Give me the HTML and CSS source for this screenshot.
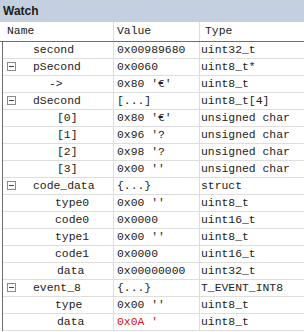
FILE: index.html
```html
<!DOCTYPE html>
<html lang="en">
<head>
    <meta charset="UTF-8">
    <title>Watch</title>
    <link rel="stylesheet" href="styles.css">
</head>
<body>
    <div class="watch">
        <div class="title">Watch</div>
        <div class="head">
            <div class="hcell name">Name</div>
            <div class="hcell value">Value</div>
            <div class="hcell type">Type</div>
        </div>
        <div class="rows">
            <div class="row"><div class="cell name lv0">second</div><div class="cell value">0x00989680</div><div class="cell type">uint32_t</div></div>
            <div class="row"><div class="cell name lv0"><svg class="box" width="9" height="9" viewBox="0 0 9 9"><rect x="0.5" y="0.5" width="8" height="8" fill="#fff" stroke="#8a8a8a"/><line x1="2" y1="4.5" x2="7" y2="4.5" stroke="#444"/></svg>pSecond</div><div class="cell value">0x0060</div><div class="cell type">uint8_t*</div></div>
            <div class="row"><div class="cell name lv1 arrow">-&gt;</div><div class="cell value">0x80 '€'</div><div class="cell type">uint8_t</div></div>
            <div class="row"><div class="cell name lv0"><svg class="box" width="9" height="9" viewBox="0 0 9 9"><rect x="0.5" y="0.5" width="8" height="8" fill="#fff" stroke="#8a8a8a"/><line x1="2" y1="4.5" x2="7" y2="4.5" stroke="#444"/></svg>dSecond</div><div class="cell value">[...]</div><div class="cell type">uint8_t[4]</div></div>
            <div class="row"><div class="cell name lv1 idx">[0]</div><div class="cell value">0x80 '€'</div><div class="cell type">unsigned char</div></div>
            <div class="row"><div class="cell name lv1 idx">[1]</div><div class="cell value">0x96 '?</div><div class="cell type">unsigned char</div></div>
            <div class="row"><div class="cell name lv1 idx">[2]</div><div class="cell value">0x98 '?</div><div class="cell type">unsigned char</div></div>
            <div class="row"><div class="cell name lv1 idx">[3]</div><div class="cell value">0x00 ''</div><div class="cell type">unsigned char</div></div>
            <div class="row"><div class="cell name lv0"><svg class="box" width="9" height="9" viewBox="0 0 9 9"><rect x="0.5" y="0.5" width="8" height="8" fill="#fff" stroke="#8a8a8a"/><line x1="2" y1="4.5" x2="7" y2="4.5" stroke="#444"/></svg>code_data</div><div class="cell value">{...}</div><div class="cell type">struct</div></div>
            <div class="row"><div class="cell name lv1">type0</div><div class="cell value">0x00 ''</div><div class="cell type">uint8_t</div></div>
            <div class="row"><div class="cell name lv1">code0</div><div class="cell value">0x0000</div><div class="cell type">uint16_t</div></div>
            <div class="row"><div class="cell name lv1">type1</div><div class="cell value">0x00 ''</div><div class="cell type">uint8_t</div></div>
            <div class="row"><div class="cell name lv1">code1</div><div class="cell value">0x0000</div><div class="cell type">uint16_t</div></div>
            <div class="row"><div class="cell name lv1 idx">data</div><div class="cell value">0x00000000</div><div class="cell type">uint32_t</div></div>
            <div class="row"><div class="cell name lv0"><svg class="box" width="9" height="9" viewBox="0 0 9 9"><rect x="0.5" y="0.5" width="8" height="8" fill="#fff" stroke="#8a8a8a"/><line x1="2" y1="4.5" x2="7" y2="4.5" stroke="#444"/></svg>event_8</div><div class="cell value">{...}</div><div class="cell type">T_EVENT_INT8</div></div>
            <div class="row"><div class="cell name lv1">type</div><div class="cell value">0x00 ''</div><div class="cell type">uint8_t</div></div>
            <div class="row"><div class="cell name lv1 idx">data</div><div class="cell value changed">0x0A '</div><div class="cell type">uint8_t</div></div>
        </div>
    </div>
</body>
</html>
```

FILE: styles.css
```css
body {
    margin: 0;
    background: #fff;
    font-family: "Liberation Mono", "DejaVu Sans Mono", monospace;
    font-size: 11.4px;
    color: #222;
}

.watch {
    width: 304px;
    height: 332px;
    overflow: hidden;
}

.title {
    height: 22px;
    line-height: 22px;
    padding-left: 3px;
    background: #c4d0df;
    font-family: "Liberation Sans", Arial, sans-serif;
    font-weight: bold;
    font-size: 12px;
    color: #1c1c1c;
}

.head {
    display: grid;
    grid-template-columns: 114px 86px 1fr;
    height: 19px;
    border-bottom: 1px solid #6e6e6e;
    background: #fff;
}

.hcell {
    line-height: 19px;
    border-right: 1px solid #dcdcdc;
}

.hcell.name { padding-left: 7px; }
.hcell.value { padding-left: 3px; }
.hcell.type { padding-left: 5px; border-right: none; }

.rows {
    margin-left: 2px;
    border-left: 1px solid #6e6e6e;
}

.row {
    display: grid;
    grid-template-columns: 111px 86px 1fr;
    height: 16px;
    border-bottom: 1px solid #dedede;
}

.cell {
    display: flex;
    align-items: center;
    white-space: nowrap;
    overflow: hidden;
    border-right: 1px solid #e2dcdc;
}

.cell.type { border-right: none; padding-left: 1px; }
.cell.value { padding-left: 3px; }
.cell.changed { color: #e01010; }

.name.lv0 { padding-left: 30px; position: relative; }
.name.lv1 { padding-left: 52px; }
.name.idx { padding-left: 54px; }
.name.arrow { padding-left: 46px; }

.box {
    position: absolute;
    left: 4px;
    top: 3px;
}
```
